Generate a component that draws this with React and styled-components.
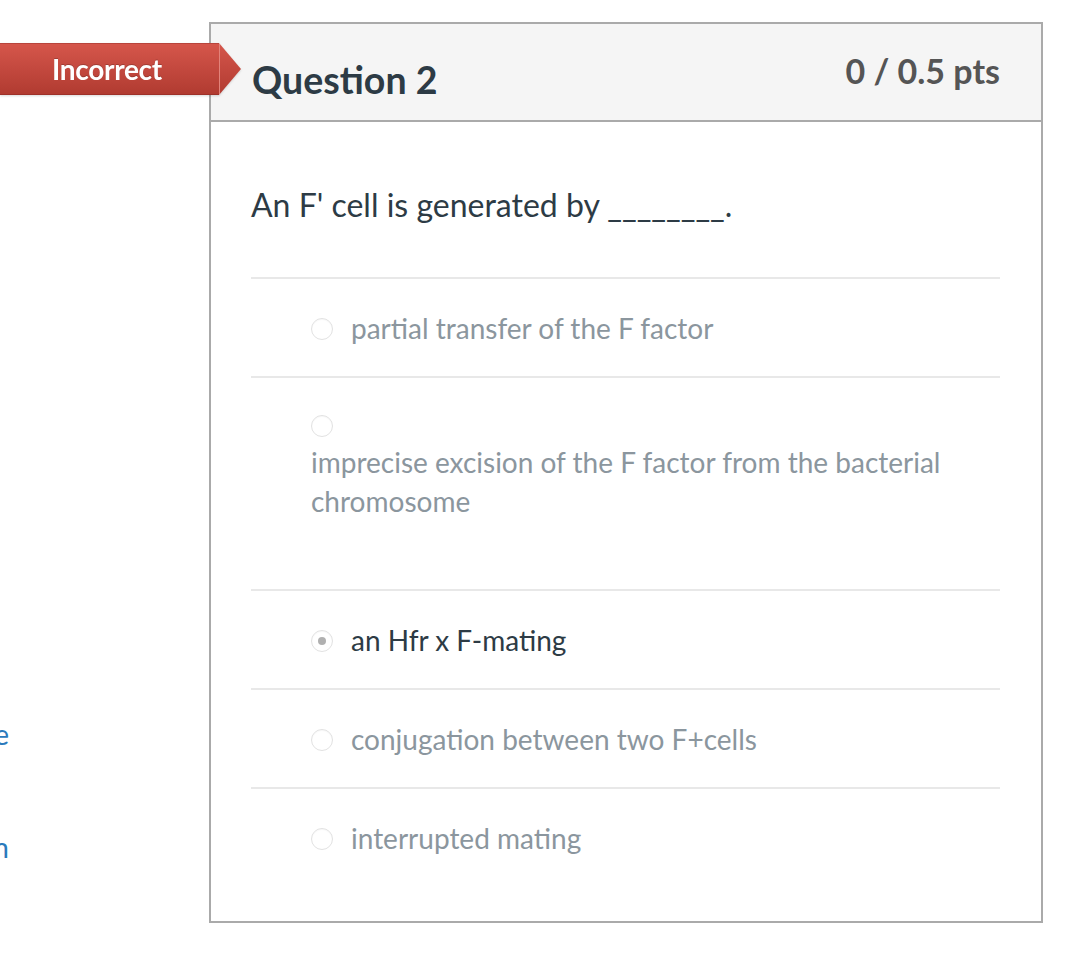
import React from "react";
import styled, { createGlobalStyle } from "styled-components";

const answers = [
  { text: "partial transfer of the F factor" },
  { text: "imprecise excision of the F factor from the bacterial chromosome", wrapped: true },
  { text: "an Hfr x F-mating", selected: true },
  { text: "conjugation between two F+cells" },
  { text: "interrupted mating" },
];

const sideLinks = [
  { label: "Resume", gap: 693 },
  { label: "Submission", gap: 74 },
];

const Radio = ({ selected }) => (
  <RadioCircle>{selected && <RadioDot />}</RadioCircle>
);

const Answer = ({ item }) => {
  if (item.wrapped) {
    return (
      <AnswerRow>
        <RadioLine>
          <Radio selected={item.selected} />
        </RadioLine>
        <WrappedLabel>{item.text}</WrappedLabel>
      </AnswerRow>
    );
  }
  return (
    <AnswerRow>
      <InlineAnswer>
        <Radio selected={item.selected} />
        <Label $selected={item.selected}>{item.text}</Label>
      </InlineAnswer>
    </AnswerRow>
  );
};

const App = () => {
  return (
    <>
      <GlobalStyle />
      <Page>
        <Sidebar>
          {sideLinks.map((link) => (
            <SideClip key={link.label} $gap={link.gap}>
              <SideLink>{link.label}</SideLink>
            </SideClip>
          ))}
        </Sidebar>
        <Card>
          <Badge>
            <BadgeBody>Incorrect</BadgeBody>
            <BadgeArrow />
          </Badge>
          <Header>
            <Title>Question 2</Title>
            <Points>0 / 0.5 pts</Points>
          </Header>
          <Body>
            <QuestionText>An F' cell is generated by ________.</QuestionText>
            <AnswerList>
              {answers.map((item) => (
                <Answer key={item.text} item={item} />
              ))}
            </AnswerList>
          </Body>
        </Card>
      </Page>
    </>
  );
};

const GlobalStyle = createGlobalStyle`
  html, body {
    margin: 0;
    padding: 0;
    background: #fff;
    font-family: Lato, "Open Sans", "Liberation Sans", sans-serif;
  }
`;

const Page = styled.div`
  display: flex;
  align-items: flex-start;
  padding-top: 22px;
`;

const Sidebar = styled.div`
  width: 209px;
  flex-shrink: 0;
  display: flex;
  flex-direction: column;
`;

const SideClip = styled.div`
  width: 9px;
  margin-top: ${(p) => p.$gap}px;
  overflow: hidden;
  display: flex;
  justify-content: flex-end;
`;

const SideLink = styled.span`
  white-space: nowrap;
  font-size: 28px;
  line-height: 39px;
  color: #2b7abc;
`;

const Card = styled.div`
  position: relative;
  width: 830px;
  border: 2px solid #aaaaaa;
  background: #fff;
`;

const Badge = styled.div`
  position: absolute;
  top: 19px;
  left: -211px;
  display: flex;
  height: 52px;
  filter: drop-shadow(0 1px 1px rgba(0, 0, 0, 0.15));
`;

const BadgeBody = styled.div`
  width: 219px;
  box-sizing: border-box;
  padding-right: 5px;
  display: flex;
  align-items: center;
  justify-content: center;
  background: linear-gradient(#d5564b, #b13b31);
  border-top: 1px solid #b8453c;
  border-bottom: 1px solid #9e3129;
  color: #fff;
  font-size: 28px;
  font-weight: 700;
  letter-spacing: -0.3px;
  text-shadow: 0 -1px 0 rgba(0, 0, 0, 0.2);
`;

const BadgeArrow = styled.div`
  width: 21px;
  background: linear-gradient(#d5564b, #b13b31);
  border-left: 1px solid #e2837a;
  clip-path: polygon(0 0, 0 100%, 100% 50%);
`;

const Header = styled.div`
  display: flex;
  justify-content: space-between;
  align-items: flex-start;
  height: 98px;
  box-sizing: border-box;
  padding: 27px 41px 0 41px;
  background: #f5f5f5;
  border-bottom: 2px solid #aaaaaa;
`;

const Title = styled.h2`
  margin: 6px 0 0;
  font-size: 37.5px;
  line-height: 45px;
  font-weight: 700;
  color: #2d3b45;
`;

const Points = styled.div`
  font-size: 34px;
  line-height: 40px;
  font-weight: 700;
  color: #555555;
`;

const Body = styled.div`
  padding: 60px 41px 35px 40px;
`;

const QuestionText = styled.p`
  margin: 0 0 50px;
  font-size: 32px;
  line-height: 45px;
  color: #2d3b45;
`;

const AnswerList = styled.div`
  display: flex;
  flex-direction: column;
`;

const AnswerRow = styled.div`
  border-top: 2px solid #e8e8e8;
  padding: 30px 0 28px 60px;
`;

const InlineAnswer = styled.div`
  display: flex;
  align-items: center;
  gap: 18px;
`;

const RadioLine = styled.div`
  height: 35px;
  display: flex;
  align-items: center;
`;

const RadioCircle = styled.span`
  width: 20px;
  height: 20px;
  flex-shrink: 0;
  border-radius: 50%;
  border: 1px solid #e2e2e2;
  background: #fff;
  display: flex;
  align-items: center;
  justify-content: center;
  box-shadow: inset 0 1px 1px rgba(0, 0, 0, 0.03);
`;

const RadioDot = styled.span`
  width: 8px;
  height: 8px;
  border-radius: 50%;
  background: #b0b0b0;
`;

const Label = styled.span`
  font-size: 28px;
  line-height: 39px;
  color: ${(p) => (p.$selected ? "#2d3b45" : "#8b969e")};
`;

const WrappedLabel = styled.div`
  max-width: 680px;
  margin-bottom: 40px;
  font-size: 28px;
  line-height: 39px;
  color: #8b969e;
`;

export default App;
